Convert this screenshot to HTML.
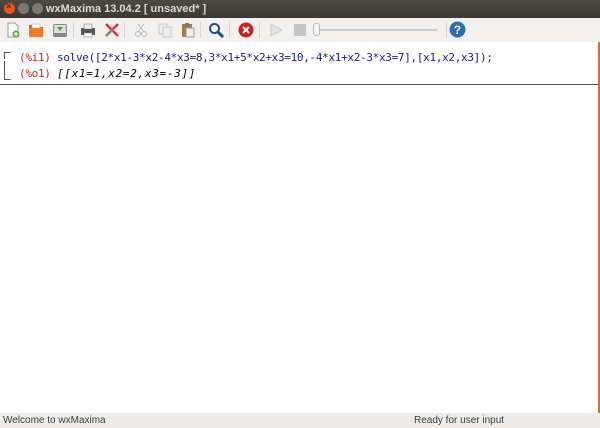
<!DOCTYPE html>
<html><head><style>
*{margin:0;padding:0;box-sizing:border-box}
body{width:600px;height:428px;position:relative;overflow:hidden;background:#fff;font-family:"Liberation Sans",sans-serif}
#title{position:absolute;left:0;top:0;width:600px;height:18px;background:linear-gradient(#4a4944,#3a3935);color:#dfdbd2;font-size:11px;font-weight:bold}
#title span{position:absolute;left:46px;top:3px}
.wb{position:absolute;top:3px;width:11px;height:11px;border-radius:50%}
#tb{position:absolute;left:0;top:18px;width:600px;height:24px;background:#f2f1f0}
.ic{position:absolute;top:4px;width:16px;height:16px}
.sep{position:absolute;top:4px;width:1px;height:16px;background:#d8d6d2}
#doc{position:absolute;left:0;top:42px;width:598px;height:371px;background:#fff}
#orange{position:absolute;left:598px;top:42px;width:2px;height:371px;background:#e8682c}
.mono{font-family:"DejaVu Sans Mono","Liberation Mono",monospace;font-size:11px;letter-spacing:-0.31px;position:absolute;white-space:pre;line-height:13px}
#status{position:absolute;left:0;top:413px;width:600px;height:15px;background:#edecea;font-size:10px;color:#3c3c3c}
</style></head><body>
<div id="title">
<div class="wb" style="left:4px;background:#e9541f"><span style="position:absolute;left:2px;top:-2px;color:#4a2a1a;font-size:9px">×</span></div>
<div class="wb" style="left:18px;background:#7a7872"></div>
<div class="wb" style="left:32px;background:#7a7872"></div>
<span>wxMaxima 13.04.2 [ unsaved* ]</span>
</div>
<div id="tb">
<svg class="ic" style="left:5px" viewBox="0 0 16 16"><path d="M3 1h7l3 3v11H3z" fill="#fafafa" stroke="#999"/><circle cx="11" cy="12" r="3.5" fill="#5aa832"/><path d="M11 10v4M9 12h4" stroke="#fff" stroke-width="1.5"/></svg>
<svg class="ic" style="left:28px" viewBox="0 0 16 16"><path d="M1 3h5l1 2h8v10H1z" fill="#e05a1a"/><path d="M1 6h14v9H1z" fill="#f07a30"/><rect x="4" y="2" width="8" height="4" fill="#fff" stroke="#aaa" stroke-width=".5"/></svg>
<svg class="ic" style="left:52px" viewBox="0 0 16 16"><rect x="1" y="2" width="14" height="13" rx="2" fill="#888"/><rect x="2" y="3" width="12" height="8" fill="#ddd"/><path d="M5 5h6l-3 4z" fill="#4aa32a"/></svg>
<div class="sep" style="left:73px"></div>
<svg class="ic" style="left:80px" viewBox="0 0 16 16"><rect x="1" y="6" width="14" height="7" rx="1" fill="#555"/><rect x="4" y="2" width="8" height="5" fill="#eee" stroke="#777" stroke-width=".5"/><rect x="4" y="11" width="8" height="4" fill="#fff" stroke="#777" stroke-width=".5"/></svg>
<svg class="ic" style="left:104px" viewBox="0 0 16 16"><path d="M2 14L14 2M2 2l12 12" stroke="#d33" stroke-width="2.5"/><path d="M2 14L9 7" stroke="#888" stroke-width="2.5"/></svg>
<div class="sep" style="left:124px"></div>
<svg class="ic" style="left:133px" viewBox="0 0 16 16"><circle cx="5" cy="12" r="2.5" fill="none" stroke="#bbb"/><circle cx="11" cy="12" r="2.5" fill="none" stroke="#bbb"/><path d="M5 10L11 2M11 10L5 2" stroke="#bbb"/></svg>
<svg class="ic" style="left:157px" viewBox="0 0 16 16"><rect x="2" y="2" width="8" height="10" fill="#eee" stroke="#ccc"/><rect x="6" y="5" width="8" height="10" fill="#eee" stroke="#ccc"/></svg>
<svg class="ic" style="left:180px" viewBox="0 0 16 16"><rect x="2" y="2" width="10" height="13" fill="#a57a4a"/><rect x="6" y="6" width="8" height="9" fill="#eee" stroke="#999"/><rect x="5" y="1" width="4" height="3" fill="#777"/></svg>
<div class="sep" style="left:200px"></div>
<svg class="ic" style="left:208px" viewBox="0 0 16 16"><circle cx="6.5" cy="6.5" r="4.5" fill="#fff" stroke="#1d4d8d" stroke-width="2"/><path d="M10 10l5 5" stroke="#1d4d8d" stroke-width="3"/></svg>
<div class="sep" style="left:229px"></div>
<svg class="ic" style="left:238px" viewBox="0 0 16 16"><circle cx="8" cy="8" r="7.5" fill="#cc1e1e"/><path d="M5 5l6 6M11 5l-6 6" stroke="#fff" stroke-width="2"/></svg>
<div class="sep" style="left:259px"></div>
<svg class="ic" style="left:268px" viewBox="0 0 16 16"><path d="M3 2l11 6-11 6z" fill="#e4e4e4" stroke="#ccc"/></svg>
<svg class="ic" style="left:292px" viewBox="0 0 16 16"><rect x="2" y="2" width="12" height="12" fill="#c4c4c4"/></svg>
<div style="position:absolute;left:313px;top:11px;width:124px;height:2px;background:#ccc"></div>
<div style="position:absolute;left:313px;top:5px;width:7px;height:13px;border:1px solid #bbb;border-radius:3px;background:#f4f4f4"></div>
<div class="sep" style="left:446px"></div>
<svg class="ic" style="left:449px;top:3px;width:17px;height:17px" viewBox="0 0 16 16"><circle cx="8" cy="8" r="7.5" fill="#2d6db0"/><text x="8" y="12" text-anchor="middle" fill="#fff" font-size="11" font-weight="bold" font-family="Liberation Sans">?</text></svg>
</div>
<div id="doc">
<svg style="position:absolute;left:3px;top:9px" width="8" height="30"><path d="M1.5 8V1.5h6" fill="none" stroke="#555"/><path d="M1.5 10V28.5h6" fill="none" stroke="#555"/></svg>
<div class="mono" style="left:19px;top:9px;color:#d02020">(%i1)</div>
<div class="mono" style="left:57px;top:9px;color:#1a1a90">solve([2*x1-3*x2-4*x3=8,3*x1+5*x2+x3=10,-4*x1+x2-3*x3=7],[x1,x2,x3]);</div>
<div class="mono" style="left:19px;top:25px;color:#d02020">(%o1)</div>
<div class="mono" style="left:57px;top:25px;color:#000;font-style:italic;letter-spacing:0.7px">[[x1=1,x2=2,x3=-3]]</div>
<div style="position:absolute;left:0;top:42px;width:598px;height:1px;background:#555"></div>
</div>
<div id="orange"></div>
<div id="status"><span style="position:absolute;left:3px;top:2px">Welcome to wxMaxima</span><span style="position:absolute;left:414px;top:2px">Ready for user input</span></div>
</body></html>
